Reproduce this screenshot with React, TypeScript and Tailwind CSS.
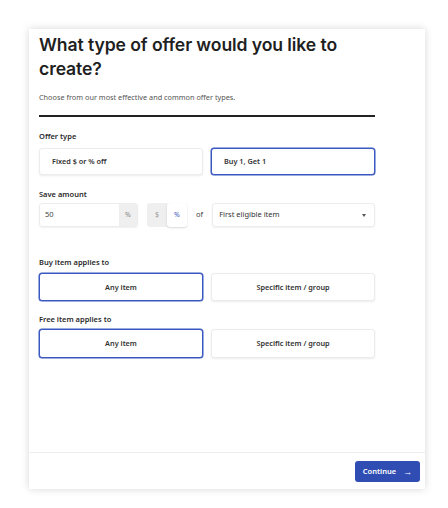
import React from "react";

const body = { fontFamily: '"Noto Sans", "Open Sans", sans-serif' };
const head = { fontFamily: 'Inter, "Noto Sans", sans-serif' };

function Label({ children, className = "" }: { children: React.ReactNode; className?: string }) {
  return (
    <div className={"text-[7.5px] leading-[10px] font-semibold text-[#2a2a2a] " + className}>{children}</div>
  );
}

function Choice({
  children,
  selected = false,
  center = false,
  h = "h-[27px]",
}: {
  children: React.ReactNode;
  selected?: boolean;
  center?: boolean;
  h?: string;
}) {
  return (
    <div
      className={
        "flex items-center rounded-[3px] bg-white text-[7.3px] font-semibold text-[#333] " +
        h +
        " " +
        (center ? "justify-center " : "pl-[12px] ") +
        (selected
          ? "border border-[#3a59c0] shadow-[0_0_0_0.5px_#3a59c0]"
          : "border border-[#ececec] shadow-[0_1px_2px_rgba(0,0,0,0.08)]")
      }
    >
      {children}
    </div>
  );
}

export default function App() {
  return (
    <div className="w-[448px] h-[508px] bg-white pt-[29px] pl-[29px]" style={body}>
      <div className="w-[396px] h-[460px] bg-white shadow-[0_0_8px_rgba(0,0,0,0.16)] flex flex-col">
        <div className="flex-1 pl-[10px] pt-[4px]">
          <div className="w-[336px]">
            <h1 className="text-[17.6px] leading-[24px] font-semibold text-[#1f1f1f] tracking-[-0.1px]" style={head}>
              What type of offer would you like to
              <br />
              create?
            </h1>
            <p className="mt-[11px] text-[7.3px] leading-[10px] text-[#555]">
              Choose from our most effective and common offer types.
            </p>
            <div className="mt-[13px] h-[2px] bg-[#222]" />

            <Label className="mt-[14px]">Offer type</Label>
            <div className="mt-[7px] grid grid-cols-2 gap-[8px]">
              <Choice>Fixed $ or % off</Choice>
              <Choice selected>Buy 1, Get 1</Choice>
            </div>

            <Label className="mt-[14px]">Save amount</Label>
            <div className="mt-[4px] flex items-center h-[24px]">
              <div className="flex h-[24px] w-[99px] rounded-[3px] border border-[#ececec] overflow-hidden shadow-[0_1px_2px_rgba(0,0,0,0.06)]">
                <div className="flex-1 flex items-center pl-[5px] text-[7.5px] text-[#444]">50</div>
                <div className="w-[18px] bg-[#efefef] flex items-center justify-center text-[7px] text-[#888]">%</div>
              </div>
              <div className="ml-[9px] flex h-[24px] w-[40px] rounded-[3px] bg-[#efefef]">
                <div className="w-[20px] flex items-center justify-center text-[7px] text-[#999]">$</div>
                <div className="w-[20px] flex items-center justify-center text-[7px] text-[#3a59c0] bg-white rounded-[3px] shadow-[0_1px_2px_rgba(0,0,0,0.15)]">
                  %
                </div>
              </div>
              <div className="ml-[9px] text-[7.5px] text-[#444]">of</div>
              <div className="ml-[9px] flex-1 h-[24px] flex items-center justify-between rounded-[3px] border border-[#ececec] pl-[6px] pr-[8px] text-[7.5px] text-[#333] shadow-[0_1px_2px_rgba(0,0,0,0.06)]">
                <span>First eligible item</span>
                <span className="w-0 h-0 border-l-[2.5px] border-r-[2.5px] border-t-[3px] border-l-transparent border-r-transparent border-t-[#555]" />
              </div>
            </div>

            <Label className="mt-[30px]">Buy item applies to</Label>
            <div className="mt-[6px] grid grid-cols-2 gap-[8px]">
              <Choice selected center h="h-[28px]">Any item</Choice>
              <Choice center h="h-[28px]">Specific item / group</Choice>
            </div>

            <Label className="mt-[13px]">Free item applies to</Label>
            <div className="mt-[5px] grid grid-cols-2 gap-[8px]">
              <Choice selected center h="h-[29px]">Any item</Choice>
              <Choice center h="h-[29px]">Specific item / group</Choice>
            </div>
          </div>
        </div>
        <div className="h-[37px] border-t border-[#eeeeee] flex items-start justify-end pt-[8px] pr-[5px]">
          <button className="h-[21px] w-[65px] rounded-[3px] bg-[#2f4db3] text-white text-[7.5px] font-semibold flex items-center justify-center gap-[7px]">
            <span>Continue</span>
            <span className="text-[9px] leading-none">→</span>
          </button>
        </div>
      </div>
    </div>
  );
}
